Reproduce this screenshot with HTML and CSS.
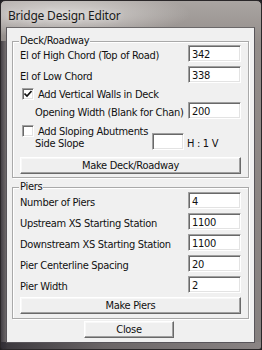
FILE: index.html
```html
<!DOCTYPE html>
<html>
<head>
<meta charset="utf-8">
<link rel="stylesheet" href="styles.css">
</head>
<body>
<div class="window">
  <div class="titlebar"><span class="title">Bridge Design Editor</span></div>
  <div class="client">
    <div class="group deck">
      <span class="legend">Deck/Roadway</span>
      <div class="row"><span class="label">El of High Chord (Top of Road)</span><span class="input">342</span></div>
      <div class="row gap"><span class="label">El of Low Chord</span><span class="input">338</span></div>
      <div class="check-row walls">
        <span class="checkbox"><svg width="8" height="8" viewBox="0 0 8 8"><path d="M0.5 3.5 L3 6 L7.5 1" fill="none" stroke="#111" stroke-width="1.6"/></svg></span>
        <span class="check-label">Add Vertical Walls in Deck</span>
      </div>
      <div class="row opening"><span class="label sub">Opening Width (Blank for Chan)</span><span class="input">200</span></div>
      <div class="check-row sloping">
        <span class="checkbox"></span>
        <span class="check-label">Add Sloping Abutments</span>
      </div>
      <div class="row slope"><span class="label sub fixed">Side Slope</span><span class="input small"></span><span class="unit">H : 1 V</span></div>
      <div class="button deck-btn">Make Deck/Roadway</div>
    </div>
    <div class="group piers">
      <span class="legend">Piers</span>
      <div class="row"><span class="label">Number of Piers</span><span class="input">4</span></div>
      <div class="row gap"><span class="label">Upstream XS Starting Station</span><span class="input">1100</span></div>
      <div class="row gap"><span class="label">Downstream XS Starting Station</span><span class="input">1100</span></div>
      <div class="row gap"><span class="label">Pier Centerline Spacing</span><span class="input">20</span></div>
      <div class="row gap"><span class="label">Pier Width</span><span class="input">2</span></div>
      <div class="button piers-btn">Make Piers</div>
    </div>
    <div class="button close-btn">Close</div>
  </div>
</div>
</body>
</html>
```

FILE: styles.css
```css
html, body {
  margin: 0;
  padding: 0;
  background: #1f1e22;
}
body {
  width: 262px;
  height: 350px;
  overflow: hidden;
}
.window {
  box-sizing: border-box;
  width: 262px;
  height: 350px;
  border-radius: 5px 5px 3px 3px;
  border: 1px solid #2a2729;
  display: flex;
  flex-direction: column;
  padding: 0 6px 6px 5px;
  background:
    radial-gradient(ellipse 130px 24px at 60px 13px, rgba(225,222,220,0.9), rgba(225,222,220,0) 100%),
    linear-gradient(to right, rgba(45,42,50,0.75), rgba(45,42,50,0.3) 5px, rgba(0,0,0,0) 6px) 0 40px / 8px 100% no-repeat,
    linear-gradient(to right, #3a373c 0, #6a6566 40%, #8a8484 100%) 0 100% / 100% 7px no-repeat,
    linear-gradient(180deg, #aaa5a2 0%, #938d8a 12%, #8a8482 60%, #85807f 100%);
}
.titlebar {
  height: 26px;
  flex: none;
  display: flex;
  align-items: center;
  padding-left: 2px;
}
.title {
  font-family: "Noto Sans", "DejaVu Sans", sans-serif;
  font-size: 12px;
  letter-spacing: -0.2px;
  color: #1a1a1a;
  padding-top: 2px;
  text-shadow: 0 0 6px rgba(255,255,255,0.6);
}
.client {
  flex: 1;
  box-sizing: border-box;
  background: #f0f0f0;
  border: 1px solid #58555a;
  border-top-color: #6b6869;
  display: flex;
  flex-direction: column;
  align-items: flex-start;
  padding: 0 5px;
  font-family: "DejaVu Sans Condensed", "DejaVu Sans", sans-serif;
  font-size: 11px;
  letter-spacing: -0.3px;
  color: #111;
}
.group {
  position: relative;
  box-sizing: border-box;
  width: 237px;
  border: 1px solid #a9a9a9;
  box-shadow: inset 1px 1px 0 #fff, 1px 1px 0 #fff;
  display: flex;
  flex-direction: column;
  padding: 3px 7px 3px 7px;
}
.deck { margin-top: 13px; }
.piers { margin-top: 9px; padding-top: 4px; padding-bottom: 4px; }
.legend {
  position: absolute;
  left: 6px;
  top: -8px;
  line-height: 13px;
  padding: 0 1px;
  background: #f0f0f0;
}
.row {
  display: flex;
  align-items: center;
  height: 17px;
  flex: none;
}
.row.gap { margin-top: 4px; }
.label {
  flex: 1;
  min-width: 0;
  white-space: nowrap;
  overflow: hidden;
  padding-top: 4px;
  line-height: 13px;
}
.label.sub { margin-left: 15px; }
.label.fixed { flex: none; width: 117px; }
.input {
  box-sizing: border-box;
  flex: none;
  width: 53px;
  height: 17px;
  background: #fff;
  border-top: 1px solid #a0a0a0;
  border-left: 1px solid #a0a0a0;
  border-right: 1px solid #fff;
  border-bottom: 1px solid #fff;
  box-shadow: inset 1px 1px 0 #696969, inset -1px -1px 0 #e3e3e3;
  padding: 2px 0 0 3px;
  line-height: 13px;
}
.input.small { width: 32px; }
.unit {
  margin-left: 3px;
  padding-top: 3px;
  line-height: 13px;
}
.check-row {
  display: flex;
  align-items: center;
  height: 13px;
  flex: none;
}
.walls { margin-top: 4px; }
.opening { margin-top: 2px; }
.sloping { margin-top: 5px; }
.slope { margin-top: -4px; }
.checkbox {
  box-sizing: border-box;
  width: 12px;
  height: 12px;
  margin-left: 2px;
  background: #fff;
  border-top: 1px solid #a0a0a0;
  border-left: 1px solid #a0a0a0;
  border-right: 1px solid #fff;
  border-bottom: 1px solid #fff;
  box-shadow: inset 1px 1px 0 #696969, inset -1px -1px 0 #e3e3e3;
  display: flex;
  align-items: center;
  justify-content: center;
}
.checkbox svg { display: block; }
.check-label {
  margin-left: 4px;
  line-height: 13px;
  padding-top: 2px;
}
.button {
  box-sizing: border-box;
  height: 17px;
  flex: none;
  display: flex;
  align-items: center;
  justify-content: center;
  background: #efefef;
  border-top: 1px solid #fff;
  border-left: 1px solid #fff;
  border-right: 1px solid #696969;
  border-bottom: 1px solid #696969;
  box-shadow: inset -1px -1px 0 #a0a0a0, inset 1px 1px 0 #f8f8f8;
  line-height: 13px;
}
.deck-btn { margin-top: 7px; }
.piers-btn { margin-top: 4px; }
.close-btn {
  width: 90px;
  margin-top: 2px;
  margin-left: 72px;
}
```
